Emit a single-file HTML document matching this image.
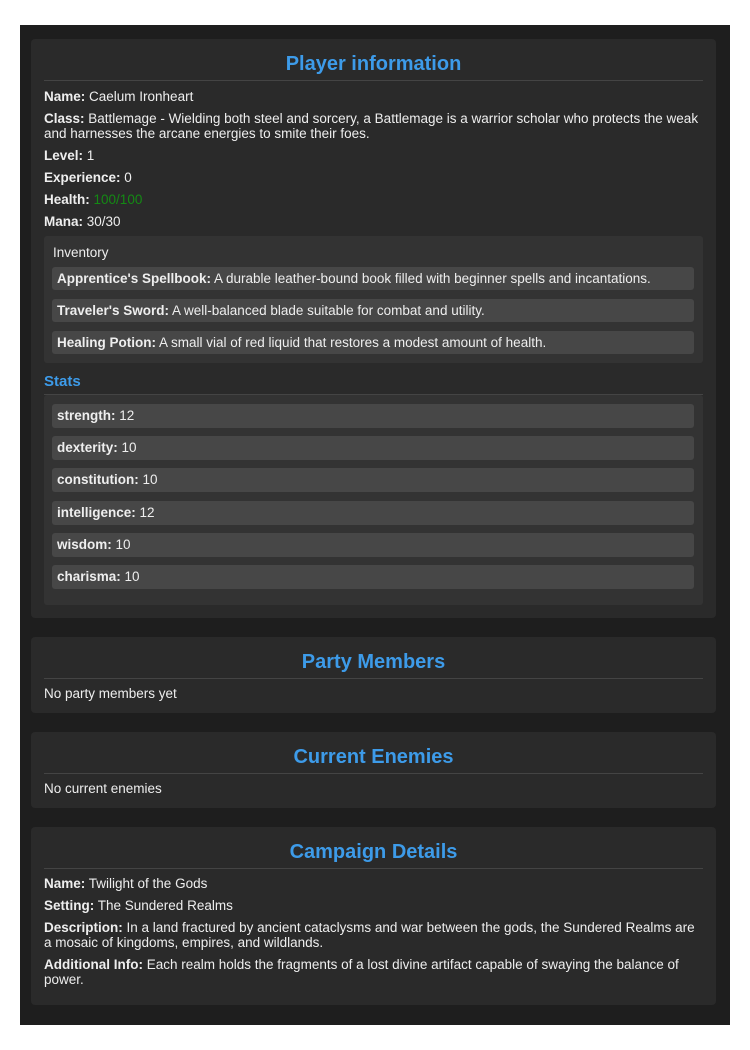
<!DOCTYPE html>
<html><head><meta charset="utf-8"><style>
*{margin:0;padding:0;box-sizing:border-box}
body{width:750px;height:1050px;background:#fff;font-family:"Liberation Sans",Arial,sans-serif;font-size:13.5px;color:#eee;position:relative}
.outer{position:absolute;left:20px;top:25px;width:710px;height:1000px;background:#1e1e1e}
.sec{position:absolute;left:31px;width:685px;background:#2a2a2a;border-radius:4px}
.a{position:absolute;white-space:nowrap}
h2{position:absolute;left:13px;right:13px;text-align:center;font-size:20px;color:#3d9be9;font-weight:bold;border-bottom:1px solid #444;line-height:24px;height:29px;top:13px!important}
.p{position:absolute;left:13px;right:12px;line-height:15px}
b{font-weight:bold}
.box{position:absolute;left:13px;width:659px;background:#333;border-radius:3px}
.it{position:absolute;left:8px;width:642px;background:#474747;border-radius:3px;padding-left:5px;line-height:23px;height:23px;white-space:nowrap}
</style></head><body>
<div class="outer"></div>
<div class="sec" style="top:39px;height:579px">
<h2>Player information</h2>
<div class="p" style="top:50px"><b>Name:</b> Caelum Ironheart</div>
<div class="p" style="top:72px"><b>Class:</b> Battlemage - Wielding both steel and sorcery, a Battlemage is a warrior scholar who protects the weak and harnesses the arcane energies to smite their foes.</div>
<div class="p" style="top:109px"><b>Level:</b> 1</div>
<div class="p" style="top:131px"><b>Experience:</b> 0</div>
<div class="p" style="top:153px"><b>Health:</b> <span style="color:#148a14">100/100</span></div>
<div class="p" style="top:175px"><b>Mana:</b> 30/30</div>
<div class="box" style="top:197px;height:127px">
<div class="a" style="left:9px;top:9px">Inventory</div>
<div class="it" style="top:31px"><b>Apprentice's Spellbook:</b> A durable leather-bound book filled with beginner spells and incantations.</div>
<div class="it" style="top:63px"><b>Traveler's Sword:</b> A well-balanced blade suitable for combat and utility.</div>
<div class="it" style="top:95px"><b>Healing Potion:</b> A small vial of red liquid that restores a modest amount of health.</div>
</div>
<div class="a" style="left:13px;top:334px;font-size:15px;font-weight:bold;color:#3d9be9">Stats</div>
<div class="a" style="left:13px;top:355px;width:659px;border-top:1px solid #444"></div>
<div class="box" style="top:356px;height:210px">
<div class="it" style="top:9px;height:24px;line-height:24px"><b>strength:</b> 12</div>
<div class="it" style="top:41px;height:24px;line-height:24px"><b>dexterity:</b> 10</div>
<div class="it" style="top:73px;height:24px;line-height:24px"><b>constitution:</b> 10</div>
<div class="it" style="top:106px;height:24px;line-height:24px"><b>intelligence:</b> 12</div>
<div class="it" style="top:138px;height:24px;line-height:24px"><b>wisdom:</b> 10</div>
<div class="it" style="top:170px;height:24px;line-height:24px"><b>charisma:</b> 10</div>
</div>
</div>
<div class="sec" style="top:637px;height:76px">
<h2>Party Members</h2>
<div class="p" style="top:49px">No party members yet</div>
</div>
<div class="sec" style="top:732px;height:76px">
<h2>Current Enemies</h2>
<div class="p" style="top:49px">No current enemies</div>
</div>
<div class="sec" style="top:827px;height:178px">
<h2>Campaign Details</h2>
<div class="p" style="top:49px"><b>Name:</b> Twilight of the Gods</div>
<div class="p" style="top:71px"><b>Setting:</b> The Sundered Realms</div>
<div class="p" style="top:93px"><b>Description:</b> In a land fractured by ancient cataclysms and war between the gods, the Sundered Realms are a mosaic of kingdoms, empires, and wildlands.</div>
<div class="p" style="top:130px"><b>Additional Info:</b> Each realm holds the fragments of a lost divine artifact capable of swaying the balance of power.</div>
</div>
</body></html>
